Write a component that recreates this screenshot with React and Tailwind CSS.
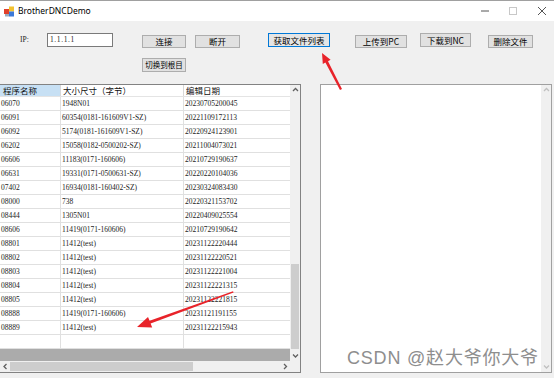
import React from "react";

const rows = [
  ["06070", "1948N01", "20230705200045"],
  ["06091", "60354(0181-161609V1-SZ)", "20221109172113"],
  ["06092", "5174(0181-161609V1-SZ)", "20220924123901"],
  ["06202", "15058(0182-0500202-SZ)", "20211004073021"],
  ["06606", "11183(0171-160606)", "20210729190637"],
  ["06631", "19331(0171-0500631-SZ)", "20220220104036"],
  ["07402", "16934(0181-160402-SZ)", "20230324083430"],
  ["08000", "738", "20220321153702"],
  ["08444", "1305N01", "20220409025554"],
  ["08606", "11419(0171-160606)", "20210729190642"],
  ["08801", "11412(test)", "20231122220444"],
  ["08802", "11412(test)", "20231122220521"],
  ["08803", "11412(test)", "20231122221004"],
  ["08804", "11412(test)", "20231122221315"],
  ["08805", "11412(test)", "20231122221815"],
  ["08888", "11419(0171-160606)", "20231121191155"],
  ["08889", "11412(test)", "20231122215943"],
  ["", "", ""],
];

const serif = "font-['Liberation_Serif','Noto_Sans_CJK_SC',serif]";
const cjk = "font-['Noto_Sans_CJK_SC','Liberation_Sans',sans-serif]";

function Btn({ children, ml, mt, w, h, focus, size = "text-[8.5px]" }) {
  return (
    <div
      className={`flex items-center justify-center whitespace-nowrap overflow-hidden ${cjk} ${size} leading-none text-black border ${
        focus ? "border-[#0078d7] bg-[#e5e5e5]" : "border-[#adadad] bg-[#e1e1e1]"
      } ${ml} ${mt} ${w} ${h}`}
    >
      {children}
    </div>
  );
}

function Chev({ dir, color = "#606060" }) {
  const d = {
    up: "M1 4 L3.5 1.5 L6 4",
    down: "M1 1.5 L3.5 4 L6 1.5",
    left: "M4.5 1 L2 3.5 L4.5 6",
    right: "M2 1 L4.5 3.5 L2 6",
  }[dir];
  return (
    <svg width="7" height="7" viewBox="0 0 7 7">
      <path d={d} fill="none" stroke={color} strokeWidth="1.3" />
    </svg>
  );
}

export default function App() {
  return (
    <div className="w-[554px] h-[378px] bg-[#f0f0f0] relative overflow-hidden flex flex-col">
      {/* Title bar */}
      <div className="h-[21px] bg-white border-t border-[#a0a0a0] flex items-center shrink-0">
        <svg width="11" height="11" viewBox="0 0 11 11" className="ml-[4px]">
          <rect x="0" y="3" width="5" height="5" fill="#e0402a" />
          <rect x="5" y="0.5" width="5" height="5" fill="#f2c230" />
          <rect x="5" y="5.5" width="5" height="5" fill="#3b78d8" />
          <rect x="1" y="8" width="4" height="2.5" fill="#9ab" />
        </svg>
        <span className="ml-[3px] font-['Noto_Sans','Liberation_Sans',sans-serif] text-[8.5px] text-black leading-none">
          BrotherDNCDemo
        </span>
        <div className="ml-auto flex items-center">
          <svg width="8" height="8" viewBox="0 0 8 8" className="mr-[20px]">
            <line x1="0" y1="4" x2="8" y2="4" stroke="#555" strokeWidth="1" />
          </svg>
          <svg width="8" height="8" viewBox="0 0 8 8" className="mr-[21px]">
            <rect x="0.5" y="0.5" width="7" height="7" fill="none" stroke="#c8c8c8" strokeWidth="1" />
          </svg>
          <svg width="8" height="8" viewBox="0 0 8 8" className="mr-[8px]">
            <line x1="0" y1="0" x2="8" y2="8" stroke="#555" strokeWidth="1" />
            <line x1="8" y1="0" x2="0" y2="8" stroke="#555" strokeWidth="1" />
          </svg>
        </div>
      </div>

      {/* Row 1 */}
      <div className="flex items-start mt-[12px] h-[15px] shrink-0">
        <div className={`ml-[20px] w-[27px] mt-[3px] ${serif} text-[7.5px] leading-none text-[#222]`}>IP:</div>
        <div className={`w-[66px] h-[14px] bg-white border border-[#7a7a7a] flex items-center pl-[2px] ${serif} text-[7.5px] tracking-[0.6px] text-[#222]`}>
          1.1.1.1
        </div>
        <Btn ml="ml-[29px]" mt="mt-[2px]" w="w-[44px]" h="h-[13px]">连接</Btn>
        <Btn ml="ml-[9px]" mt="mt-[2px]" w="w-[45px]" h="h-[13px]">断开</Btn>
        <Btn ml="ml-[28px]" mt="mt-0" w="w-[62px]" h="h-[14px]" focus>获取文件列表</Btn>
        <Btn ml="ml-[25px]" mt="mt-[2px]" w="w-[52px]" h="h-[13px]">上传到PC</Btn>
        <Btn ml="ml-[13px]" mt="mt-0" w="w-[51px]" h="h-[14px]">下载到NC</Btn>
        <Btn ml="ml-[17px]" mt="mt-[2px]" w="w-[45px]" h="h-[13px]">删除文件</Btn>
      </div>

      {/* Row 2 */}
      <div className="flex mt-[10px] shrink-0">
        <Btn ml="ml-[142px]" mt="mt-0" w="w-[44px]" h="h-[14px]" size="text-[7.5px]">切换到根目</Btn>
      </div>

      {/* Main */}
      <div className="flex mt-[12px] shrink-0">
        {/* Grid */}
        <div className="w-[301px] h-[289px] border-t border-r border-b border-[#828282] flex flex-col bg-white">
          <div className="flex h-[276px]">
            <div className="w-[290px] flex flex-col">
              {/* header */}
              <div className={`flex h-[12px] border-b border-[#e4e4e4] ${cjk} text-[8.5px] leading-none text-[#111]`}>
                <div className="w-[61px] bg-[#c7e0f4] border-r border-[#d8d8d8] flex items-center pl-[3px]">程序名称</div>
                <div className="w-[123px] border-r border-[#d8d8d8] flex items-center pl-[2px]">大小尺寸（字节）</div>
                <div className="flex-1 flex items-center pl-[2px]">编辑日期</div>
              </div>
              {rows.map((r, i) => (
                <div
                  key={i}
                  className={`flex h-[14px] border-b border-[#e0e0e0] ${serif} text-[7.5px] leading-none text-[#222]`}
                >
                  <div className="w-[61px] border-r border-[#e0e0e0] flex items-center pl-[1px]">{r[0]}</div>
                  <div className="w-[123px] border-r border-[#e0e0e0] flex items-center pl-[1px]">{r[1]}</div>
                  <div className="flex-1 flex items-center pl-[1px]">{r[2]}</div>
                </div>
              ))}
              <div className="flex-1 bg-[#ababab]" />
            </div>
            {/* vertical scrollbar */}
            <div className="w-[10px] bg-[#f0f0f0] flex flex-col items-center">
              <div className="h-[10px] flex items-center justify-center">
                <Chev dir="up" />
              </div>
              <div className="h-[169px]" />
              <div className="w-[8px] h-[85px] bg-[#cdcdcd]" />
              <div className="flex-1" />
              <div className="h-[10px] flex items-center justify-center">
                <Chev dir="down" />
              </div>
            </div>
          </div>
          {/* horizontal scrollbar */}
          <div className="h-[11px] flex bg-[#f0f0f0]">
            <div className="w-[10px] flex items-center justify-center">
              <Chev dir="left" />
            </div>
            <div className="w-[183px] h-[9px] mt-[1px] bg-[#cdcdcd]" />
            <div className="w-[87px]" />
            <div className="w-[10px] flex items-center justify-center">
              <Chev dir="right" />
            </div>
            <div className="w-[10px]" />
          </div>
        </div>

        {/* Right text box */}
        <div className="ml-[19px] w-[232px] h-[289px] border border-[#a0a0a0] bg-white flex">
          <div className="flex-1" />
          <div className="w-[10px] bg-[#f0f0f0] flex flex-col items-center justify-between">
            <div className="h-[10px] flex items-center justify-center">
              <Chev dir="up" color="#c0c0c0" />
            </div>
            <div className="h-[10px] flex items-center justify-center">
              <Chev dir="down" color="#c0c0c0" />
            </div>
          </div>
        </div>
      </div>

      {/* Watermark */}
      <div className="absolute left-[347px] top-[349px] font-['Liberation_Sans','Noto_Sans_CJK_SC',sans-serif] text-[18px] leading-[18px] tracking-[0.8px] text-[#8e8e8e] whitespace-nowrap">
        CSDN @赵大爷你大爷
      </div>

      {/* Red arrows */}
      <svg className="absolute left-0 top-0 pointer-events-none" width="554" height="378" viewBox="0 0 554 378">
        <polygon
          points="342,89 328,61.2 330.6,59.8 322,53 322.8,63.9 325.4,62.6 340,90"
          fill="#e8232a"
        />
        <polygon
          points="233,291.2 149.6,320.8 148,317 137,327 152.2,327.4 150.6,323.6 233.6,292.6"
          fill="#e8232a"
        />
      </svg>
    </div>
  );
}
